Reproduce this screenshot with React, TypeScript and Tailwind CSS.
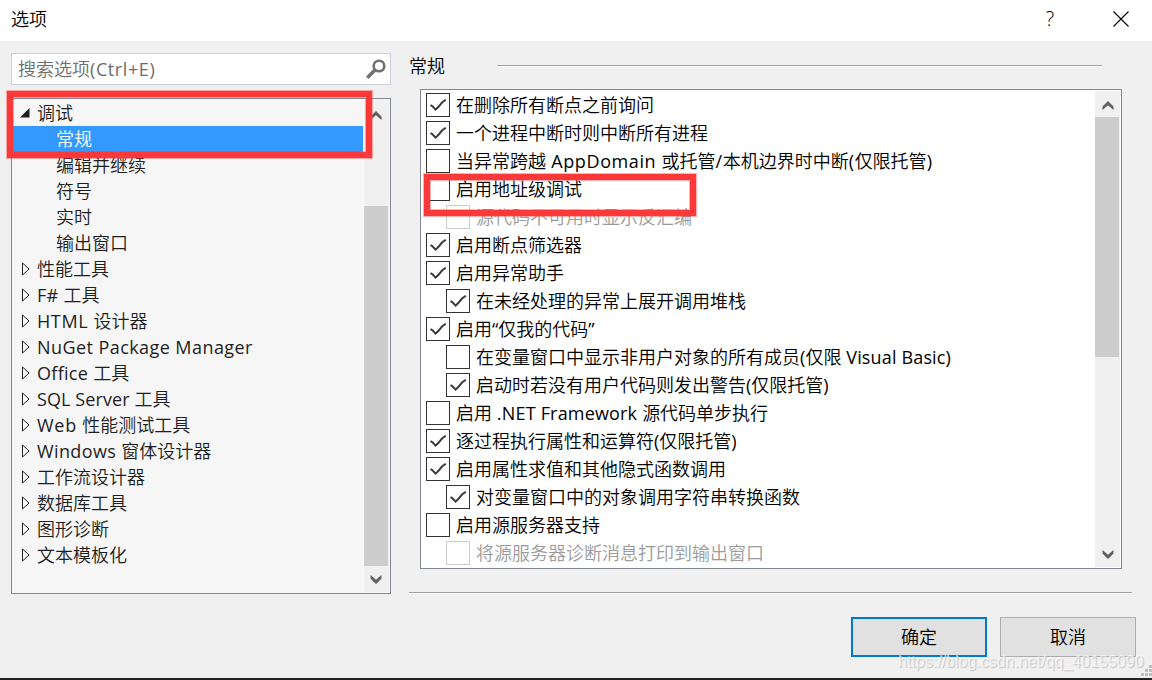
import React from "react";

interface TreeItem {
  label: string;
  level: number;
  expanded?: boolean;
  selected?: boolean;
  tracking?: string;
}

interface Option {
  label: string;
  checked?: boolean;
  nested?: boolean;
  disabled?: boolean;
  tracking?: string;
}

const treeItems: TreeItem[] = [
  { label: "调试", level: 0, expanded: true },
  { label: "常规", level: 1, selected: true },
  { label: "编辑并继续", level: 1 },
  { label: "符号", level: 1 },
  { label: "实时", level: 1 },
  { label: "输出窗口", level: 1 },
  { label: "性能工具", level: 0 },
  { label: "F# 工具", level: 0, tracking: "tracking-[0.3px]" },
  { label: "HTML 设计器", level: 0, tracking: "tracking-[0.6px]" },
  { label: "NuGet Package Manager", level: 0, tracking: "tracking-[0.43px]" },
  { label: "Office 工具", level: 0, tracking: "tracking-[0.3px]" },
  { label: "SQL Server 工具", level: 0, tracking: "tracking-[0.1px]" },
  { label: "Web 性能测试工具", level: 0, tracking: "tracking-[0.7px]" },
  { label: "Windows 窗体设计器", level: 0, tracking: "tracking-[0.38px]" },
  { label: "工作流设计器", level: 0 },
  { label: "数据库工具", level: 0 },
  { label: "图形诊断", level: 0 },
  { label: "文本模板化", level: 0 },
];

const options: Option[] = [
  { label: "在删除所有断点之前询问", checked: true },
  { label: "一个进程中断时则中断所有进程", checked: true },
  { label: "当异常跨越 AppDomain 或托管/本机边界时中断(仅限托管)", tracking: "tracking-[0.6px]" },
  { label: "启用地址级调试" },
  { label: "源代码不可用时显示反汇编", nested: true, disabled: true },
  { label: "启用断点筛选器", checked: true },
  { label: "启用异常助手", checked: true },
  { label: "在未经处理的异常上展开调用堆栈", checked: true, nested: true },
  { label: "启用“仅我的代码”", checked: true },
  { label: "在变量窗口中显示非用户对象的所有成员(仅限 Visual Basic)", nested: true, tracking: "tracking-[0.15px]" },
  { label: "启动时若没有用户代码则发出警告(仅限托管)", checked: true, nested: true },
  { label: "启用 .NET Framework 源代码单步执行", tracking: "tracking-[0.18px]" },
  { label: "逐过程执行属性和运算符(仅限托管)", checked: true },
  { label: "启用属性求值和其他隐式函数调用", checked: true },
  { label: "对变量窗口中的对象调用字符串转换函数", checked: true, nested: true },
  { label: "启用源服务器支持" },
  { label: "将源服务器诊断消息打印到输出窗口", nested: true, disabled: true },
];

// latin parts of a label get the regular weight and their own letter spacing
const Label: React.FC<{ text: string; tracking?: string }> = ({ text, tracking = "" }) => (
  <>
    {text.split(/([\x20-\x7e“”]+)/).map((part, idx) => (
      <span key={idx} className={idx % 2 === 1 ? `font-normal ${tracking}` : undefined}>
        {part}
      </span>
    ))}
  </>
);

const ScrollArrow: React.FC<{ down?: boolean }> = ({ down }) => (
  <svg width="12" height="9" viewBox="0 0 12 9" className={down ? "rotate-180" : ""}>
    <path d="M0.5 5.6L6 0L11.5 5.6V9L6 4.2L0.5 9Z" fill="#606060" />
  </svg>
);

const TreeRow: React.FC<{ item: TreeItem }> = ({ item }) => (
  <div
    className={
      item.selected
        ? "flex h-[26px] items-center bg-[#3399ff] text-white"
        : "flex h-[26px] items-center text-[#1e1e1e]"
    }
  >
    {item.level === 0 ? (
      <span className="flex w-6 shrink-0 pl-[7px]">
        {item.expanded ? (
          <svg width="10" height="10" viewBox="0 0 10 10">
            <path d="M9.5 0V9.5H0Z" fill="#1e1e1e" />
          </svg>
        ) : (
          <svg width="9" height="14" viewBox="0 0 9 14" className="ml-px">
            <path d="M1.5 1V13L8 7Z" fill="#fff" stroke="#1e1e1e" />
          </svg>
        )}
      </span>
    ) : (
      <span className="w-[43px] shrink-0" />
    )}
    <span className="whitespace-nowrap">
      <Label text={item.label} tracking={item.tracking} />
    </span>
  </div>
);

const OptionRow: React.FC<{ option: Option }> = ({ option }) => (
  <div className={option.nested ? "flex h-7 items-center pl-6" : "flex h-7 items-center pl-1"}>
    <span
      className={
        option.disabled
          ? "h-6 w-6 shrink-0 border border-[#cccccc]"
          : "h-6 w-6 shrink-0 border border-[#333333]"
      }
    >
      {option.checked && (
        <svg width="22" height="22" viewBox="0 0 22 22">
          <path d="M3.5 11L5.5 12.3L8.6 15.6L11.5 12.8L15 8.5L18.8 5.8" fill="none" stroke="#3a3a3a" strokeWidth="2" />
        </svg>
      )}
    </span>
    <span
      className={
        option.disabled
          ? "ml-1.5 whitespace-nowrap text-[#9b9b9b]"
          : "ml-1.5 whitespace-nowrap text-black"
      }
    >
      <Label text={option.label} tracking={option.tracking} />
    </span>
  </div>
);

export default function App() {
  return (
    <div className="relative flex h-[680px] w-[1152px] flex-col overflow-hidden bg-[#f0f0f0] font-['Open_Sans','Noto_Sans_CJK_SC',sans-serif] text-[18px] leading-6 font-[350] text-black">
      <header className="flex h-[41px] shrink-0 items-center bg-white pr-6 pb-1 pl-[11px]">
        <span>选项</span>
        <span className="ml-auto w-[18px] text-center text-[20px]">?</span>
        <svg width="16" height="16" viewBox="0 0 16 16" className="mr-[-1px] ml-[54px]">
          <path d="M0.5 0.5L15.5 15.5M15.5 0.5L0.5 15.5" stroke="#000" strokeWidth="1.1" />
        </svg>
      </header>

      <main className="flex h-[552px] shrink-0 pl-[11px]">
        <aside className="flex w-[380px] flex-col pt-3">
          <div className="flex h-8 shrink-0 items-center border border-[#ccceDB] bg-white pr-1 pl-1.5 text-[#6d6d6d]">
            <span>
              <Label text="搜索选项(Ctrl+E)" tracking="tracking-[0.6px]" />
            </span>
            <svg width="20" height="20" viewBox="0 0 20 20" className="ml-auto">
              <circle cx="13" cy="7" r="5.3" fill="none" stroke="#717171" strokeWidth="2.6" />
              <path d="M9 11L1.2 18.8" stroke="#717171" strokeWidth="3.6" />
            </svg>
          </div>
          <div className="mt-[13px] flex h-[496px] shrink-0 border border-[#828790] bg-[#f6f6f6] p-px">
            <div className="w-[351px] border-r border-white">
              {treeItems.map((item) => (
                <TreeRow key={item.label + item.level} item={item} />
              ))}
            </div>
            <div className="flex flex-1 flex-col bg-[#f0f0f0]">
              <div className="flex h-[26px] w-6 items-center justify-center pt-1">
                <ScrollArrow />
              </div>
              <div className="mt-20 h-[360px] w-6 bg-[#cdcdcd]" />
              <div className="flex h-[26px] w-6 items-center justify-center">
                <ScrollArrow down />
              </div>
            </div>
          </div>
        </aside>

        <section className="ml-[18px] flex w-[723px] flex-col border-b border-[#a0a0a0] shadow-[0_1px_0_#fff]">
          <div className="flex h-12 shrink-0 items-center pt-0.5">
            <span>常规</span>
            <div className="ml-[52px] h-0.5 w-[605px] border-t border-[#a0a0a0] bg-white" />
          </div>
          <div className="ml-[11px] flex h-[480px] w-[702px] shrink-0 border border-[#828790] bg-white p-px">
            <div className="flex-1">
              {options.map((option) => (
                <OptionRow key={option.label} option={option} />
              ))}
            </div>
            <div className="flex w-[25px] flex-col bg-[#f0f0f0]">
              <div className="flex h-[26px] items-center justify-center pt-0.5">
                <ScrollArrow />
              </div>
              <div className="h-60 w-6 bg-[#cdcdcd]" />
              <div className="mt-auto flex h-[26px] items-center justify-center">
                <ScrollArrow down />
              </div>
            </div>
          </div>
        </section>
      </main>

      <footer className="flex h-[85px] shrink-0 justify-end gap-[13px] pt-6 pr-4">
        <button className="h-10 w-[136px] border-2 border-[#0078d7] bg-[#e1e1e1]">确定</button>
        <button className="h-10 w-[136px] border border-[#adadad] bg-[#e1e1e1]">取消</button>
      </footer>
      <div className="h-0.5 shrink-0 bg-[#222]" />

      {/* resize grip */}
      <svg width="11" height="11" viewBox="0 0 11 11" className="absolute right-0 bottom-[4px]">
        <path d="M8 0h3v3h-3zM4 4h3v3h-3zM8 4h3v3h-3zM0 8h3v3h-3zM4 8h3v3h-3zM8 8h3v3h-3z" fill="#bfbfbf" />
      </svg>

      {/* highlight frames */}
      <div className="absolute top-[91px] left-[7px] h-[67px] w-[365px] border-[6px] border-[#fd3838] shadow-[0_0_0_1px_#fd383866,inset_0_0_0_1px_#fd383866]" />
      <div className="absolute top-[174px] left-[424px] h-[42px] w-[272px] border-[6px] border-[#fd3838] shadow-[0_0_0_1px_#fd383866,inset_0_0_0_1px_#fd383866]" />

      <div className="absolute top-[650px] left-[898px] font-['Liberation_Sans',sans-serif] text-[16px] font-normal whitespace-nowrap text-white/60 [text-shadow:1px_1px_1px_#c4c4c4]">
        https://blog.csdn.net/qq_40155090
      </div>
    </div>
  );
}
